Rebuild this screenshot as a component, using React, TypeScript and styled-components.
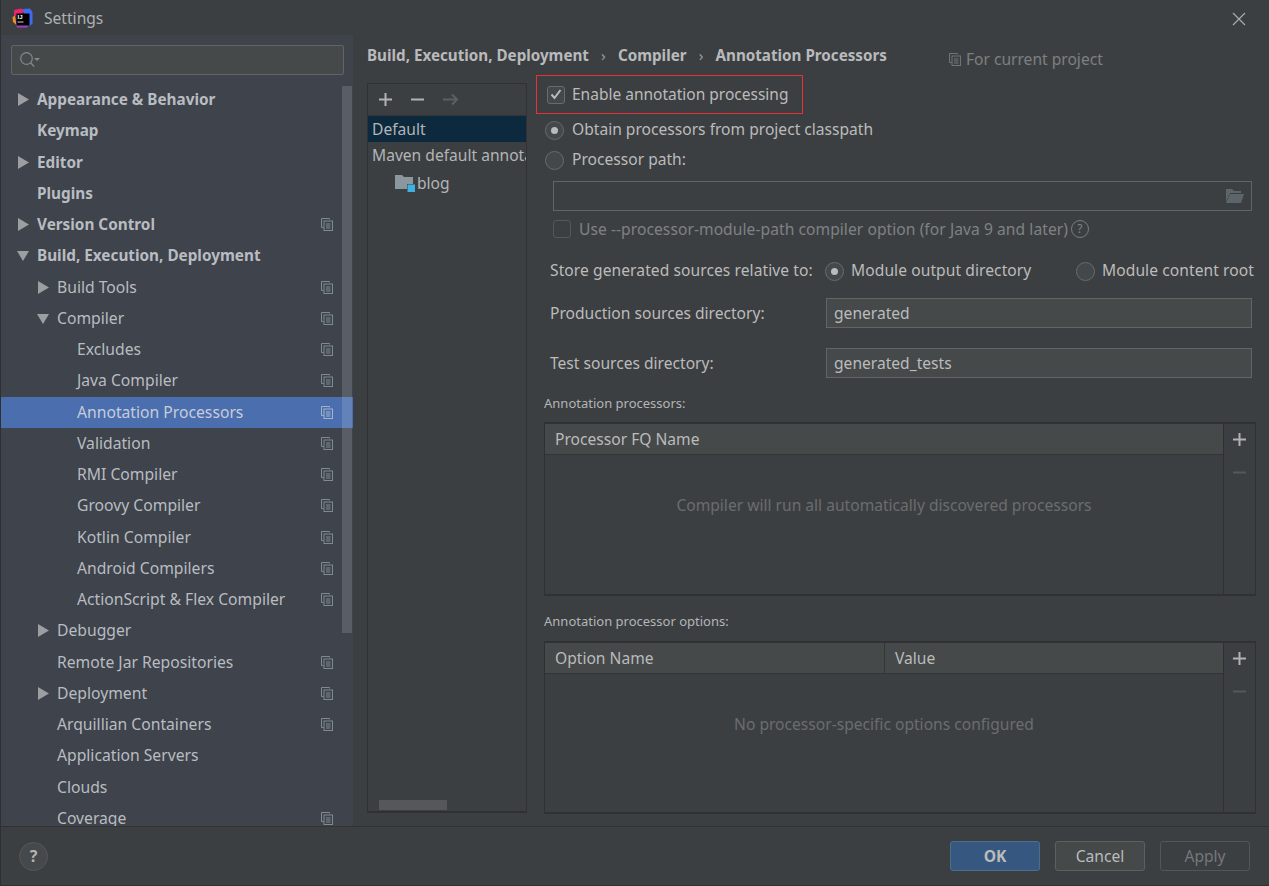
import React from "react";
import styled, { createGlobalStyle } from "styled-components";

const Global = createGlobalStyle`
  html, body { margin: 0; padding: 0; background: #3c3f41; }
  * { box-sizing: border-box; }
  body { font-family: "Noto Sans", "Open Sans", sans-serif; font-size: 15.6px; color: #bbbbbb; }
`;

const Window = styled.div`
  width: 1269px; height: 886px; background: #3c3f41; border-left: 1px solid #2e3032; border-bottom: 1px solid #2e3032;
  display: flex; flex-direction: column; overflow: hidden;
`;
const TitleBar = styled.div`
  height: 35px; flex: none; display: flex; align-items: center; padding-left: 11px; gap: 10px;
  color: #aeb0b2; position: relative;
`;
const CloseGlyph = styled.svg`
  position: absolute; right: 23px; top: 12px; width: 14px; height: 14px;
`;
const Main = styled.div`
  height: 791px; flex: none; display: flex;
`;
const Sidebar = styled.aside`
  width: 352px; flex: none; background: #3e434c; position: relative; overflow: hidden; padding-top: 10px;
`;
const SearchBox = styled.div`
  margin: 0 9px 0 10px; height: 30px; background: #45494a; border: 1px solid #646464; border-radius: 2px;
  display: flex; align-items: center; padding-left: 7px;
`;
const Tree = styled.div`
  margin-top: 9px; display: grid; grid-auto-rows: 31.25px;
`;
const TreeRow = styled.div<{ $level: number; $selected?: boolean; $bold?: boolean }>`
  display: flex; align-items: center; padding-left: ${(p) => 16 + p.$level * 20}px; padding-right: 20px;
  background: ${(p) => (p.$selected ? "#4b6eaf" : "transparent")};
  font-weight: ${(p) => (p.$bold ? 700 : 400)};
  font-size: ${(p) => (p.$bold ? "15.3px" : "15.7px")};
  color: ${(p) => (p.$selected ? "#c6ccd8" : "#b9bcc0")};
  white-space: nowrap;
`;
const ArrowSlot = styled.span`
  width: 20px; flex: none; display: flex; align-items: center;
`;
const RowLabel = styled.span`
  flex: 1; margin-top: -1px;
`;
const Scrollbar = styled.div`
  position: absolute; left: 341px; top: 51px; width: 10px; height: 547px; background: rgba(255, 255, 255, 0.14);
`;
const Content = styled.section`
  flex: 1; min-width: 0; display: flex; flex-direction: column; padding-left: 14px;
`;
const Header = styled.div`
  height: 40px; flex: none; display: flex; align-items: flex-start; position: relative;
`;
const Crumbs = styled.div`
  display: flex; align-items: center; height: 40px; font-weight: 700; font-size: 15.2px; color: #b8babc;
`;
const CrumbSep = styled.span`
  width: 29px; text-align: center; font-weight: 400; color: #9a9c9e;
`;
const ProjectNote = styled.div`
  margin-left: 62px; margin-top: 14px; display: flex; align-items: center; gap: 5px; color: #7c7f82; height: 20px;
`;
const Body = styled.div`
  flex: 1; display: flex; min-height: 0;
`;
const ProfilePanel = styled.div`
  width: 160px; height: 730px; margin-top: 8px; flex: none; border: 1px solid #2f3132; border-bottom-width: 2px; position: relative; overflow: hidden;
`;
const ProfileToolbar = styled.div`
  height: 32px; display: flex; align-items: center; padding-left: 11px; gap: 19px; border-bottom: 1px solid #333537;
`;
const ProfileRow = styled.div<{ $h: number; $selected?: boolean; $indent?: number }>`
  height: ${(p) => p.$h}px; display: flex; align-items: center; white-space: nowrap; gap: 2px;
  padding-left: ${(p) => p.$indent ?? 4}px; background: ${(p) => (p.$selected ? "#0d293e" : "transparent")};
  color: #b3b5b7; overflow: hidden;
`;
const HScroll = styled.div`
  position: absolute; left: 11px; bottom: 1px; width: 68px; height: 10px; background: #555759;
`;
const Form = styled.div`
  flex: 1; min-width: 0; padding-left: 9px; display: flex; flex-direction: column;
`;
const RedBox = styled.div`
  width: 267px; height: 39px; border: 1px solid #e53232; display: flex; align-items: center; padding-left: 10px; gap: 7px;
  flex: none; font-size: 15.5px;
`;
const Lifted = styled.span`
  margin-top: -2px;
`;
const CheckBox = styled.span<{ $disabled?: boolean }>`
  width: 18px; height: 18px; flex: none; border-radius: 3px; border: 1px solid ${(p) => (p.$disabled ? "#55585a" : "#6b6b6b")};
  background: ${(p) => (p.$disabled ? "transparent" : "#43494a")}; display: flex; align-items: center; justify-content: center;
`;
const RadioRow = styled.div<{ $h: number; $top?: number }>`
  height: ${(p) => p.$h}px; margin-top: ${(p) => p.$top ?? 0}px; flex: none; display: flex; align-items: center; padding-left: 9px; gap: 8px; white-space: nowrap;
`;
const Radio = styled.span<{ $on?: boolean }>`
  width: 19px; height: 19px; flex: none; border-radius: 50%; border: 1px solid #686a6c; background: #43494a;
  display: flex; align-items: center; justify-content: center;
  &::after { content: ""; display: ${(p) => (p.$on ? "block" : "none")}; width: 7px; height: 7px; border-radius: 50%; background: #bbbbbb; }
`;
const PathField = styled.div`
  height: 30px; width: 699px; margin: 6px 0 0 17px; flex: none; border: 1px solid #646464; display: flex; align-items: center; justify-content: flex-end; padding-right: 6px;
`;
const UseRow = styled.div`
  height: 36px; flex: none; padding-left: 17px; display: flex; align-items: center; gap: 8px; color: #7f8285; white-space: nowrap; letter-spacing: 0.06px;
`;
const QuestionMark = styled.span`
  width: 18px; height: 18px; margin-left: -5px; flex: none; border: 1px solid #7a7d80; border-radius: 50%; font-size: 12px; line-height: 16px; text-align: center; color: #7f8285;
`;
const StoreRow = styled.div`
  height: 30px; margin-top: 9px; flex: none; display: flex; align-items: center; padding-left: 14px; white-space: nowrap; letter-spacing: 0.07px;
`;
const StoreLabel = styled.span`
  width: 275px; flex: none; margin-top: -2px;
`;
const StoreChoice = styled.label<{ $w?: number }>`
  display: flex; align-items: center; gap: 7px; width: ${(p) => p.$w ?? 251}px; flex: none;
`;
const FieldRow = styled.div<{ $top: number }>`
  height: 30px; margin-top: ${(p) => p.$top}px; flex: none; display: flex; align-items: center; padding-left: 14px;
`;
const FieldLabel = styled.span`
  width: 276px; flex: none;
`;
const TextInput = styled.div`
  width: 426px; height: 30px; background: #45494a; border: 1px solid #646464; display: flex; align-items: center; padding-left: 7px; color: #bbbbbb;
`;
const SectionLabel = styled.div<{ $top: number }>`
  margin-top: ${(p) => p.$top}px; height: 18px; line-height: 18px; padding-left: 8px; font-size: 13px; flex: none; color: #b3b5b7;
`;
const TableWrap = styled.div<{ $h: number; $top: number }>`
  width: 712px; height: ${(p) => p.$h}px; margin: ${(p) => p.$top}px 0 0 8px; flex: none; border: 1px solid #2f3132; border-width: 2px 1px 2px 1px; display: flex;
`;
const TableMain = styled.div`
  flex: 1; min-width: 0; display: flex; flex-direction: column; border-right: 1px solid #2f3132;
`;
const TableHead = styled.div`
  height: 31px; flex: none; background: #45494a; border-bottom: 1px solid #323436; display: flex;
`;
const HeadCell = styled.div<{ $w?: number }>`
  width: ${(p) => (p.$w ? `${p.$w}px` : "auto")}; flex: ${(p) => (p.$w ? "none" : 1)}; padding-left: 10px; display: flex; align-items: center;
  & + & { border-left: 1px solid #333537; padding-left: 10px; }
`;
const EmptyNote = styled.div`
  flex: 1; display: flex; align-items: center; justify-content: center; color: #6a6d70; padding-bottom: 39px;
`;
const TableSide = styled.div`
  width: 31px; flex: none; display: flex; flex-direction: column; align-items: center; padding-top: 9px; gap: 20px;
`;
const Footer = styled.footer`
  flex: 1; border-top: 1px solid #323232; display: flex; align-items: center; padding: 0 19px 0 18px; justify-content: space-between;
`;
const HelpButton = styled.div`
  width: 29px; height: 29px; border-radius: 50%; background: #46494b; border: 1px solid #55585a; display: flex; align-items: center; justify-content: center; font-weight: 700; font-size: 16px; color: #b2b4b6;
`;
const Buttons = styled.div`
  display: flex; gap: 15px;
`;
const Button = styled.div<{ $kind: "primary" | "normal" | "disabled" }>`
  width: 90px; height: 30px; border-radius: 3px; display: flex; align-items: center; justify-content: center;
  border: 1px solid ${(p) => (p.$kind === "primary" ? "#4c708c" : p.$kind === "normal" ? "#5e6060" : "#535557")};
  background: ${(p) => (p.$kind === "primary" ? "#365880" : p.$kind === "normal" ? "#45494a" : "transparent")};
  color: ${(p) => (p.$kind === "disabled" ? "#75787a" : "#bbbbbb")};
  font-weight: ${(p) => (p.$kind === "primary" ? 700 : 400)};
`;

const CopyIcon = ({ c = "#7f8b91" }: { c?: string }) => (
  <svg width="12" height="13" viewBox="0 0 12 13" fill="none" style={{ flex: "none" }}>
    <path d="M8.5 1.5V.5H.5V9.5H2.5" stroke={c} />
    <rect x="3" y="3" width="8.5" height="9.5" fill="none" stroke={c} />
    <path d="M5 6h4.5M5 8h4.5M5 10h4.5" stroke={c} />
  </svg>
);
const Arrow = ({ open }: { open?: boolean }) => (
  <svg width="12" height="13" viewBox="0 0 12 13">
    {open ? <path d="M0 2h12L6 12z" fill="#9c9ea1" /> : <path d="M1 0l11 6.5L1 13z" fill="#9c9ea1" />}
  </svg>
);
const PlusIcon = ({ c = "#b0b2b4" }: { c?: string }) => (
  <svg width="13" height="13" viewBox="0 0 13 13"><path d="M5.5 0h2v5.5H13v2H7.5V13h-2V7.5H0v-2h5.5z" fill={c} /></svg>
);
const MinusIcon = ({ c = "#b0b2b4" }: { c?: string }) => (
  <svg width="13" height="13" viewBox="0 0 13 13"><path d="M0 5.5h13v2H0z" fill={c} /></svg>
);
const ForwardIcon = () => (
  <svg width="16" height="13" viewBox="0 0 16 13" fill="none"><path d="M0 6.5h14M9 1.5l5 5-5 5" stroke="#5c5f61" strokeWidth="2" /></svg>
);
const Logo = () => (
  <svg width="22" height="22" viewBox="0 0 22 22">
    <path d="M2 3L9 1.5 14 4 6 8 2 9z" fill="#e8246e" />
    <path d="M11 2L18 1.5 20.5 5 20.5 17 15 20 14 16z" fill="#3d6cf0" />
    <path d="M2 13.5L6 18H15V20.5H5z" fill="#a63cc6" />
    <path d="M.5 10L3 8.5 4.5 18 1 15z" fill="#f28c2a" />
    <rect x="4.5" y="6.5" width="13" height="12" fill="#000" />
    <text x="5.5" y="12" fontSize="6" fontWeight="700" fill="#fff" fontFamily="Liberation Sans, sans-serif">IJ</text>
    <rect x="5.5" y="14.5" width="6" height="1" fill="#cfcfcf" />
  </svg>
);
const SearchIcon = () => (
  <svg width="22" height="18" viewBox="0 0 22 18" fill="none">
    <circle cx="7.5" cy="7.5" r="5.8" stroke="#85888a" strokeWidth="1.2" />
    <path d="M11.6 11.8l3.6 3.6" stroke="#85888a" strokeWidth="1.4" />
    <path d="M15 7h6l-3 3z" fill="#85888a" />
  </svg>
);
const FolderOpen = () => (
  <svg width="20" height="16" viewBox="0 0 20 16"><path d="M1 1h6l2 2h7v2H5L1 14z" fill="#5c666a" /><path d="M5 6h14l-3 9H1z" fill="#5c666a" /></svg>
);
const ModuleFolder = () => (
  <svg width="20" height="18" viewBox="0 0 20 18">
    <path d="M0 1h7l2 2h9v12H0z" fill="#8a979f" />
    <rect x="12" y="10" width="8" height="8" fill="#3c3f41" />
    <rect x="12.5" y="10.5" width="7.5" height="7.5" fill="#3eb1e0" />
  </svg>
);

type Node = { t: string; l: number; a?: "r" | "d"; b?: boolean; c?: boolean; s?: boolean };
const nodes: Node[] = [
  { t: "Appearance & Behavior", l: 0, a: "r", b: true },
  { t: "Keymap", l: 0, b: true },
  { t: "Editor", l: 0, a: "r", b: true },
  { t: "Plugins", l: 0, b: true },
  { t: "Version Control", l: 0, a: "r", b: true, c: true },
  { t: "Build, Execution, Deployment", l: 0, a: "d", b: true },
  { t: "Build Tools", l: 1, a: "r", c: true },
  { t: "Compiler", l: 1, a: "d", c: true },
  { t: "Excludes", l: 2, c: true },
  { t: "Java Compiler", l: 2, c: true },
  { t: "Annotation Processors", l: 2, c: true, s: true },
  { t: "Validation", l: 2, c: true },
  { t: "RMI Compiler", l: 2, c: true },
  { t: "Groovy Compiler", l: 2, c: true },
  { t: "Kotlin Compiler", l: 2, c: true },
  { t: "Android Compilers", l: 2, c: true },
  { t: "ActionScript & Flex Compiler", l: 2, c: true },
  { t: "Debugger", l: 1, a: "r" },
  { t: "Remote Jar Repositories", l: 1, c: true },
  { t: "Deployment", l: 1, a: "r", c: true },
  { t: "Arquillian Containers", l: 1, c: true },
  { t: "Application Servers", l: 1 },
  { t: "Clouds", l: 1 },
  { t: "Coverage", l: 1, c: true },
];

export default function App() {
  return (
    <Window>
      <Global />
      <TitleBar>
        <Logo />
        <span>Settings</span>
        <CloseGlyph viewBox="0 0 14 14" fill="none"><path d="M1 1l12 12M13 1L1 13" stroke="#a9abad" strokeWidth="1.2" /></CloseGlyph>
      </TitleBar>
      <Main>
        <Sidebar>
          <SearchBox><SearchIcon /></SearchBox>
          <Tree>
            {nodes.map((n) => (
              <TreeRow key={n.t} $level={n.l} $bold={n.b} $selected={n.s}>
                <ArrowSlot>{n.a && <Arrow open={n.a === "d"} />}</ArrowSlot>
                <RowLabel>{n.t}</RowLabel>
                {n.c && <CopyIcon c={n.s ? "#a5b2c8" : undefined} />}
              </TreeRow>
            ))}
          </Tree>
          <Scrollbar />
        </Sidebar>
        <Content>
          <Header>
            <Crumbs>
              <span>Build, Execution, Deployment</span>
              <CrumbSep>›</CrumbSep>
              <span>Compiler</span>
              <CrumbSep>›</CrumbSep>
              <span>Annotation Processors</span>
            </Crumbs>
            <ProjectNote><CopyIcon c="#6e7679" />For current project</ProjectNote>
          </Header>
          <Body>
            <ProfilePanel>
              <ProfileToolbar><PlusIcon /><MinusIcon /><ForwardIcon /></ProfileToolbar>
              <ProfileRow $h={26} $selected>Default</ProfileRow>
              <ProfileRow $h={26}>Maven default annotation processors profile</ProfileRow>
              <ProfileRow $h={29} $indent={27}><ModuleFolder />blog</ProfileRow>
              <HScroll />
            </ProfilePanel>
            <Form>
              <RedBox>
                <CheckBox><svg width="12" height="11" viewBox="0 0 12 11" fill="none"><path d="M1.5 5.5l3 3.5 6-8" stroke="#bbbbbb" strokeWidth="2" /></svg></CheckBox>
                <Lifted>Enable annotation processing</Lifted>
              </RedBox>
              <RadioRow $h={30} $top={1}><Radio $on /><Lifted>Obtain processors from project classpath</Lifted></RadioRow>
              <RadioRow $h={30}><Radio /><Lifted>Processor path:</Lifted></RadioRow>
              <PathField><FolderOpen /></PathField>
              <UseRow><CheckBox $disabled />Use --processor-module-path compiler option (for Java 9 and later)<QuestionMark>?</QuestionMark></UseRow>
              <StoreRow>
                <StoreLabel>Store generated sources relative to:</StoreLabel>
                <StoreChoice><Radio $on /><Lifted>Module output directory</Lifted></StoreChoice>
                <StoreChoice $w={190}><Radio /><Lifted>Module content root</Lifted></StoreChoice>
              </StoreRow>
              <FieldRow $top={12}><FieldLabel>Production sources directory:</FieldLabel><TextInput>generated</TextInput></FieldRow>
              <FieldRow $top={20}><FieldLabel>Test sources directory:</FieldLabel><TextInput>generated_tests</TextInput></FieldRow>
              <SectionLabel $top={16}>Annotation processors:</SectionLabel>
              <TableWrap $h={174} $top={10}>
                <TableMain>
                  <TableHead><HeadCell>Processor FQ Name</HeadCell></TableHead>
                  <EmptyNote>Compiler will run all automatically discovered processors</EmptyNote>
                </TableMain>
                <TableSide><PlusIcon /><MinusIcon c="#55585a" /></TableSide>
              </TableWrap>
              <SectionLabel $top={16}>Annotation processor options:</SectionLabel>
              <TableWrap $h={173} $top={11}>
                <TableMain>
                  <TableHead><HeadCell $w={339}>Option Name</HeadCell><HeadCell>Value</HeadCell></TableHead>
                  <EmptyNote>No processor-specific options configured</EmptyNote>
                </TableMain>
                <TableSide><PlusIcon /><MinusIcon c="#55585a" /></TableSide>
              </TableWrap>
            </Form>
          </Body>
        </Content>
      </Main>
      <Footer>
        <HelpButton>?</HelpButton>
        <Buttons>
          <Button $kind="primary">OK</Button>
          <Button $kind="normal">Cancel</Button>
          <Button $kind="disabled">Apply</Button>
        </Buttons>
      </Footer>
    </Window>
  );
}
